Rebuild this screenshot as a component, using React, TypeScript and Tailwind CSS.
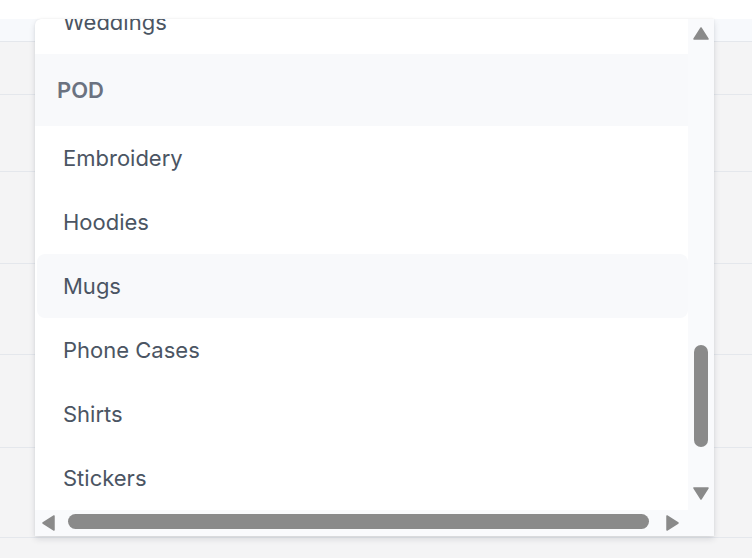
import React from 'react';

const rowHeights = [53, 77, 92, 91, 93, 90, 40];

const items = ['Embroidery', 'Hoodies', 'Mugs', 'Phone Cases', 'Shirts', 'Stickers'];

const Arrow: React.FC<{ dir: 'up' | 'down' | 'left' | 'right' }> = ({ dir }) => {
  const pts = {
    up: '8,2 15,13 1,13',
    down: '1,2 15,2 8,13',
    left: '13,1 13,15 2,8',
    right: '2,1 2,15 13,8',
  }[dir];
  return (
    <svg width="16" height="16" viewBox="0 0 16 16" className="block">
      <polygon points={pts} fill="#8a8a8a" stroke="#8a8a8a" strokeWidth="1.5" strokeLinejoin="round" />
    </svg>
  );
};

const App: React.FC = () => {
  const hovered = 'Mugs';

  return (
    <div className="relative h-[558px] w-[752px] overflow-hidden bg-white font-['Inter',sans-serif]">
      {/* table behind the dropdown */}
      <div className="h-[19px] bg-white" />
      <div className="h-[23px] border-b border-[#e4e7ec] bg-[#f7f9fc]" />
      {rowHeights.map((h, i) => (
        <div key={i} className="border-b border-[#e4e7ec] bg-[#f4f4f5]" style={{ height: h }} />
      ))}

      {/* listbox */}
      <div className="absolute left-[35px] top-[19px] flex h-[517px] w-[679px] flex-col overflow-hidden rounded-tl-md bg-white shadow-[0_3px_6px_rgba(15,23,42,0.12),0_0_2px_rgba(15,23,42,0.08)]">
        <div className="flex h-[491px]">
          <div className="w-[653px] overflow-hidden">
            <div className="-mt-[29px] text-[22px] text-[#4b5563]">
              <div className="flex h-16 items-center pl-[28px]">Weddings</div>
              <div className="flex h-[72px] items-center bg-[#f8f9fb] pl-[22px] font-semibold text-[#6b7280]">POD</div>
              {items.map((name) => (
                <div
                  key={name}
                  className={`flex h-16 items-center ${name === hovered ? 'ml-[2px] rounded-lg bg-[#f8f9fb] pl-[26px]' : 'pl-[28px]'}`}
                >
                  {name}
                </div>
              ))}
            </div>
          </div>

          {/* vertical scrollbar */}
          <div className="flex w-[26px] flex-col items-center bg-[#f9fafc]">
            <div className="mt-[7px]">
              <Arrow dir="up" />
            </div>
            <div className="mt-[303px] h-[102px] w-[14px] rounded-full bg-[#8a8a8a]" />
            <div className="mt-[39px]">
              <Arrow dir="down" />
            </div>
          </div>
        </div>

        {/* horizontal scrollbar */}
        <div className="flex h-[26px] items-center bg-[#f9fafc]">
          <div className="ml-[6px]">
            <Arrow dir="left" />
          </div>
          <div className="-mt-[3px] ml-[11px] h-[15px] w-[581px] rounded-full bg-[#8a8a8a]" />
          <div className="ml-[16px]">
            <Arrow dir="right" />
          </div>
        </div>
      </div>
    </div>
  );
};

export default App;
